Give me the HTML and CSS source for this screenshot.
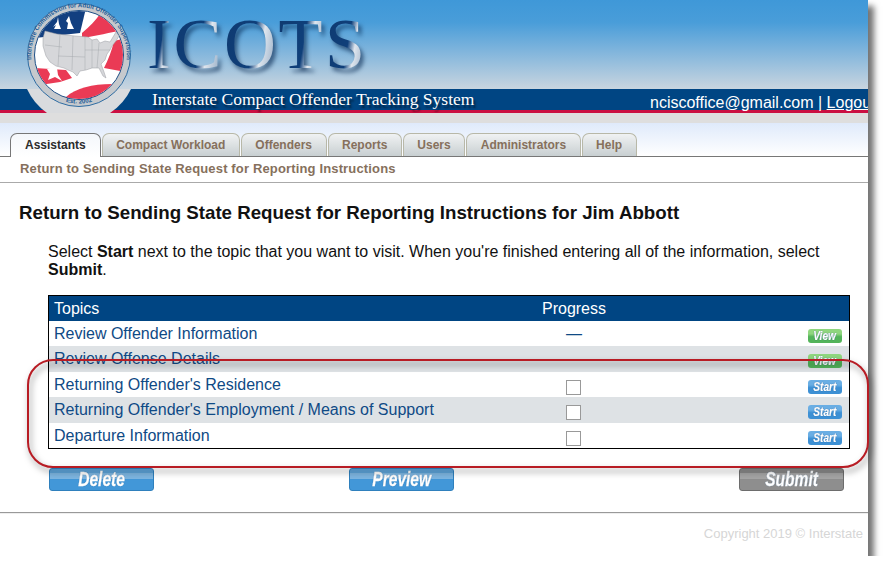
FILE: index.html
```html
<!DOCTYPE html>
<html lang="en">
<head>
    <meta charset="UTF-8">
    <meta name="viewport" content="width=device-width, initial-scale=1.0">
    <title>ICOTS</title>
    <link rel="stylesheet" href="styles.css">
</head>
<body>
    <div class="page">
        <div class="masthead">
            <div class="sky">
                <div class="wordmark"><span>I</span><span>C</span><span>O</span><span>T</span><span>S</span></div>
            </div>
            <div class="bluebar">
                <div class="system-name">Interstate Compact Offender Tracking System</div>
                <div class="user-info">nciscoffice@gmail.com | <a href="#">Logout</a></div>
            </div>
            <div class="redline"></div>
            <svg class="seal" width="120" height="113" viewBox="19 0 120 113">
                <defs>
                    <clipPath id="flagclip"><circle cx="79" cy="55" r="44"/></clipPath>
                    <path id="toparc" d="M 37.6 78.9 A 47.8 47.8 0 1 1 120.4 78.9"/>
                    <path id="botarc" d="M 50 94 A 49 49 0 0 0 108 94"/>
                </defs>
                <path d="M27 89 A60 60 0 0 0 47 113 L110 113 A60 60 0 0 0 131 89 Z" fill="#d9dbde"/>
                <circle cx="79" cy="55" r="51.5" fill="#c6c9cd" stroke="#2f6da3" stroke-width="1"/>
                <circle cx="79" cy="55" r="44.5" fill="#fff" stroke="#1d4f86" stroke-width="1"/>
                <g clip-path="url(#flagclip)">
                    <path d="M34 8 H86 L80 33 L34 38 Z" fill="#123f80"/>
                    <path d="M82 33 C90 26 96 20 100 14 L124 30 C112 32 96 36 82 38 Z" fill="#ea3a55"/>
                    <path d="M126 38 L126 72 L104 68 C108 60 112 50 114 41 Z" fill="#ea3a55"/>
                    <path d="M34 68 L66 70 L72 78 L60 82 L34 86 Z" fill="#ea3a55"/>
                    <path d="M66 97 C76 88 92 84 112 84 L108 102 L66 102 Z" fill="#ea3a55"/>
                </g>
                <path d="M58 17 L59 24 L61 29 L54 29 L56 25 L53 27 L57 22 Z M69 16 L71 23 L74 29 L67 29 L68 23 L66 21 Z" fill="#fff"/>
                <path d="M45 31 L57 34 L75 36 L88 37 L92 40 L97 39 L100 43 L105 41 L110 42 L113 37 L116 32 L119 36 L116 41 L112 46 L110 50 L107 54 L105 60 L101 64 L104 72 L106 78 L103 76 L99 68 L92 68 L86 70 L80 71 L77 76 L73 72 L68 70 L64 68 L56 66 L50 62 L46 56 L43 46 L43 38 Z" fill="#d6d7da" stroke="#9a9da3" stroke-width="0.5"/>
                <path d="M45 45 L62 47 M60 34 L58 66 M73 36 L72 70 M85 37 L85 70 M58 56 L85 57 M92 40 L92 68 M85 50 L110 50 M99 43 L97 68" fill="none" stroke="#a5a8ad" stroke-width="0.5"/>
                <path d="M47 69 L57 68 L58 75 L62 81 L55 77 L48 80 L50 74 Z" fill="#fff"/>
                <text class="seal-text"><textPath href="#toparc" startOffset="50%" text-anchor="middle">Interstate Commission for Adult Offender Supervision</textPath></text>
                <text class="seal-text"><textPath href="#botarc" startOffset="50%" text-anchor="middle">Est. 2002</textPath></text>
            </svg>
        </div>
        <div class="greyband"></div>

        <div class="tabs">
            <a class="tab active" href="#">Assistants</a>
            <a class="tab" href="#">Compact Workload</a>
            <a class="tab" href="#">Offenders</a>
            <a class="tab" href="#">Reports</a>
            <a class="tab" href="#">Users</a>
            <a class="tab" href="#">Administrators</a>
            <a class="tab" href="#">Help</a>
        </div>
        <div class="breadcrumb">Return to Sending State Request for Reporting Instructions</div>

        <div class="content">
            <h1 class="title">Return to Sending State Request for Reporting Instructions for Jim Abbott</h1>
            <p class="intro">Select <b>Start</b> next to the topic that you want to visit. When you're finished entering all of the information, select <b>Submit</b>.</p>

            <table class="topics">
                <thead>
                    <tr><th class="col-topic">Topics</th><th class="col-progress">Progress</th><th class="col-action"></th></tr>
                </thead>
                <tbody>
                    <tr>
                        <td>Review Offender Information</td>
                        <td class="progress">&mdash;</td>
                        <td class="action"><a class="mini-btn view" href="#"><span>View</span></a></td>
                    </tr>
                    <tr class="alt">
                        <td>Review Offense Details</td>
                        <td class="progress"></td>
                        <td class="action"><a class="mini-btn view" href="#"><span>View</span></a></td>
                    </tr>
                    <tr>
                        <td>Returning Offender's Residence</td>
                        <td class="progress"><div class="check"></div></td>
                        <td class="action"><a class="mini-btn" href="#"><span>Start</span></a></td>
                    </tr>
                    <tr class="alt">
                        <td>Returning Offender's Employment / Means of Support</td>
                        <td class="progress"><div class="check"></div></td>
                        <td class="action"><a class="mini-btn" href="#"><span>Start</span></a></td>
                    </tr>
                    <tr>
                        <td>Departure Information</td>
                        <td class="progress"><div class="check"></div></td>
                        <td class="action"><a class="mini-btn" href="#"><span>Start</span></a></td>
                    </tr>
                </tbody>
            </table>

            <div class="actions">
                <a class="big-btn" href="#"><span>Delete</span></a>
                <a class="big-btn preview" href="#"><span>Preview</span></a>
                <a class="big-btn disabled" href="#"><span>Submit</span></a>
            </div>
        </div>

        <div class="footer">Copyright 2019 &copy; Interstate</div>

        <div class="callout"></div>
    </div>
</body>
</html>
```

FILE: styles.css
```css
body {
    margin: 0;
    background: #fff;
    font-family: "Liberation Sans", Arial, sans-serif;
}
.page {
    position: relative;
    width: 868px;
    height: 556px;
    background: #fff;
    box-shadow: 6px 6px 6px rgba(0, 0, 0, 0.55);
}

/* header */
.masthead {
    position: relative;
    overflow: hidden;
}
.sky {
    height: 89px;
    padding: 10px 0 0 147px;
    box-sizing: border-box;
    background: linear-gradient(#3f98d8 0%, #499dd9 25%, #7cb3dc 55%, #c9d5df 100%);
}
.wordmark {
    font-family: "Liberation Serif", serif;
    font-size: 72px;
    line-height: 68px;
    letter-spacing: 2.5px;
    filter: drop-shadow(3px 4px 2px rgba(0, 30, 70, 0.6));
}
.wordmark span {
    display: inline-block;
    color: transparent;
    background: linear-gradient(100deg, #0f3a70 0%, #0f3f7a 52%, #dfe6ee 66%, #7f9ab8 100%);
    -webkit-background-clip: text;
    background-clip: text;
}
.bluebar {
    display: flex;
    height: 21px;
    background: #004583;
    color: #fff;
    white-space: nowrap;
}
.system-name {
    flex: none;
    width: 650px;
    padding-left: 152px;
    box-sizing: border-box;
    font-family: "Liberation Serif", serif;
    font-size: 17.5px;
    line-height: 21px;
    text-shadow: 2px 3px 2px rgba(0, 0, 0, 0.5);
}
.user-info {
    flex: none;
    font-size: 16px;
    line-height: 27px;
    height: 21px;
}
.user-info a {
    color: #fff;
}
.redline {
    height: 3px;
    background: #cb0f41;
}
.seal {
    position: absolute;
    left: 19px;
    top: 0;
}
.seal-text {
    font-family: "Liberation Sans", sans-serif;
    font-size: 6.2px;
    font-weight: bold;
    fill: #1d5d99;
}
.greyband {
    height: 10px;
    background: #dedede;
}

/* tabs */
.tabs {
    display: flex;
    gap: 1px;
    height: 34px;
    padding: 10px 0 0 10px;
    box-sizing: border-box;
    background: linear-gradient(#dfeafb, #fff);
    border-bottom: 1px solid #777;
}
.tab {
    height: 23px;
    padding: 0 13.5px;
    box-sizing: border-box;
    border: 1px solid #b8b8a8;
    border-bottom: 0;
    border-radius: 7px 7px 0 0;
    background: linear-gradient(#f0f2f3, #c8cfd1);
    color: #86705c;
    font-size: 12px;
    font-weight: bold;
    line-height: 22px;
    text-decoration: none;
}
.tab.active {
    height: 24px;
    padding: 0 14px;
    border-color: #777;
    background: linear-gradient(#f4f7fb, #fff);
    color: #2c2c2c;
    position: relative;
    z-index: 1;
}
.breadcrumb {
    height: 25px;
    padding-left: 20px;
    border-bottom: 1px solid #aaa;
    color: #86705c;
    font-size: 13px;
    font-weight: bold;
    letter-spacing: 0.15px;
    line-height: 24px;
}

/* main */
.content {
    padding: 0 19px;
}
.title {
    margin: 0;
    padding-top: 19px;
    font-size: 18.72px;
    line-height: 21px;
    color: #111;
}
.intro {
    margin: 20px 0 0 29px;
    width: 790px;
    font-size: 16px;
    line-height: 18px;
    color: #111;
}
.topics {
    margin: 16px 0 0 29px;
    width: 802px;
    border: 1px solid #000;
    border-collapse: separate;
    border-spacing: 0;
    table-layout: fixed;
    font-size: 16px;
    color: #0f4a85;
}
.topics th {
    height: 25px;
    padding: 0 0 0 5px;
    background: #004583;
    color: #fff;
    font-weight: normal;
    text-align: left;
}
.topics th.col-progress {
    padding: 0;
    text-align: center;
    text-indent: 2px;
}
.col-topic {
    width: 444px;
}
.col-progress {
    width: 150px;
}
.topics td {
    box-sizing: border-box;
    height: 25px;
    padding: 0 0 0 5px;
    line-height: 25px;
    vertical-align: top;
}
.topics .alt td {
    height: 26px;
    background: #dee2e5;
}
.topics td.progress {
    padding: 0;
    text-align: center;
    text-indent: 2px;
}
.topics td.action {
    padding: 8px 7px 0 0;
    text-align: right;
}
.check {
    width: 13px;
    height: 13px;
    margin: 8px auto 0;
    border: 1px solid #999;
    background: #fff;
}
.mini-btn {
    display: flex;
    justify-content: center;
    width: 34px;
    height: 14px;
    margin-left: auto;
    border-radius: 3px;
    background: linear-gradient(#6aaee4 0%, #6aaee4 35%, #3d90d4 55%, #3d90d4 100%);
    color: #fff;
    font-size: 13px;
    font-weight: bold;
    font-style: italic;
    line-height: 14px;
    text-decoration: none;
    -webkit-text-stroke: 0.2px #fff;
    text-shadow: 0 0 1px #0b3f7a;
}
.mini-btn span {
    transform: scaleX(0.78);
}
.mini-btn.view {
    background: linear-gradient(#8fd67e 0%, #8fd67e 35%, #53b45a 55%, #53b45a 100%);
}
.actions {
    display: flex;
    margin: 19px 5px 0 30px;
}
.big-btn {
    display: flex;
    justify-content: center;
    width: 105px;
    height: 23px;
    box-sizing: border-box;
    border: 1px solid #2f80bd;
    border-radius: 3px;
    background: linear-gradient(#5da3d8 0, #5da3d8 4px, #7db5e0 4px, #7db5e0 10px, #4297d8 10px, #4297d8 100%);
    color: #fff;
    font-size: 21px;
    font-weight: bold;
    font-style: italic;
    line-height: 20px;
    text-decoration: none;
    -webkit-text-stroke: 0.3px #fff;
    text-shadow: 0 0 1px #1c4f80;
}
.big-btn span {
    transform: scaleX(0.74);
}
.big-btn.preview {
    margin-left: 195px;
}
.big-btn.disabled {
    margin-left: auto;
    border-color: #6d6d6d;
    background: linear-gradient(#888 0, #888 4px, #a5a5a5 4px, #a5a5a5 10px, #8e8e8e 10px, #8e8e8e 100%);
}
.footer {
    position: absolute;
    left: 0;
    right: 0;
    bottom: 0;
    height: 43px;
    padding-right: 5px;
    border-top: 1px solid #999;
    box-shadow: inset 0 1px 0 #eee;
    color: #d6d6d6;
    font-size: 13px;
    line-height: 41px;
    text-align: right;
}

/* red annotation drawn over the screenshot */
.callout {
    position: absolute;
    left: 27px;
    top: 359px;
    width: 842px;
    height: 109px;
    box-sizing: border-box;
    border: 2px solid #b81c24;
    border-radius: 26px;
    filter: drop-shadow(2px 4px 3px rgba(0, 0, 0, 0.5));
    pointer-events: none;
}
```
